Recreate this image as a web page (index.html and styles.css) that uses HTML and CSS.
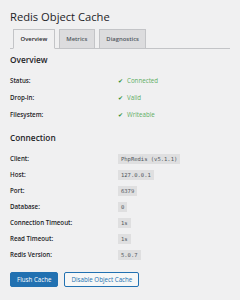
FILE: index.html
```html
<!DOCTYPE html>
<html lang="en">
<head>
    <meta charset="UTF-8">
    <meta name="viewport" content="width=device-width, initial-scale=1.0">
    <title>Redis Object Cache</title>
    <link rel="stylesheet" href="styles.css">
</head>
<body>
    <div class="wrap">
        <h1>Redis Object Cache</h1>

        <nav class="tabs">
            <a class="tab active" href="#overview">Overview</a>
            <a class="tab" href="#metrics">Metrics</a>
            <a class="tab" href="#diagnostics">Diagnostics</a>
        </nav>

        <h2>Overview</h2>
        <table class="info">
            <tr>
                <th>Status:</th>
                <td class="ok"><span class="check">&#10004;</span>Connected</td>
            </tr>
            <tr>
                <th>Drop-in:</th>
                <td class="ok"><span class="check">&#10004;</span>Valid</td>
            </tr>
            <tr>
                <th>Filesystem:</th>
                <td class="ok"><span class="check">&#10004;</span>Writeable</td>
            </tr>
        </table>

        <h2>Connection</h2>
        <table class="info compact">
            <tr>
                <th>Client:</th>
                <td><code>PhpRedis (v5.1.1)</code></td>
            </tr>
            <tr>
                <th>Host:</th>
                <td><code>127.0.0.1</code></td>
            </tr>
            <tr>
                <th>Port:</th>
                <td><code>6379</code></td>
            </tr>
            <tr>
                <th>Database:</th>
                <td><code>0</code></td>
            </tr>
            <tr>
                <th>Connection Timeout:</th>
                <td><code>1s</code></td>
            </tr>
            <tr>
                <th>Read Timeout:</th>
                <td><code>1s</code></td>
            </tr>
            <tr>
                <th>Redis Version:</th>
                <td><code>5.0.7</code></td>
            </tr>
        </table>

        <div class="actions">
            <button class="button primary">Flush Cache</button>
            <button class="button">Disable Object Cache</button>
        </div>
    </div>
</body>
</html>
```

FILE: styles.css
```css
body {
    font-family: "Open Sans", Arial, sans-serif;
    background-color: #f0f0f1;
    color: #3c434a;
    margin: 0;
    font-size: 6.2px;
}

.wrap {
    padding: 0 10px;
}

h1 {
    font-size: 11.2px;
    font-weight: 400;
    color: #1d2327;
    margin: 0;
    padding: 9px 0 0;
    line-height: 16px;
}

.tabs {
    display: flex;
    gap: 4px;
    padding-left: 3px;
    margin-top: 4px;
    border-bottom: 1px solid #c3c4c7;
}

.tab {
    display: block;
    padding: 0 6.5px;
    height: 18px;
    line-height: 18px;
    font-weight: 600;
    font-size: 5.9px;
    color: #50575e;
    text-decoration: none;
    background-color: #dcdcde;
    border: 1px solid #c3c4c7;
    border-bottom: none;
    margin-bottom: -1px;
}

.tab.active {
    background-color: #f0f0f1;
    color: #1d2327;
    border-bottom: 1px solid #f0f0f1;
}

h2 {
    font-size: 8.3px;
    font-weight: 600;
    color: #1d2327;
    margin: 5px 0 6px;
    line-height: 12px;
}

.info {
    border-collapse: collapse;
    width: 100%;
    margin-bottom: 9px;
}

.info th,
.info td {
    padding: 0;
    height: 17px;
    text-align: left;
    vertical-align: middle;
}

.compact th,
.compact td {
    height: 16.1px;
}

.info th {
    width: 108px;
    font-weight: 600;
    color: #1d2327;
}

.ok {
    color: #5eae63;
}

.check {
    color: #2e8f36;
    font-size: 6px;
    margin-right: 4px;
}

code {
    font-family: "DejaVu Sans Mono", monospace;
    font-size: 5.5px;
    color: #50575e;
    background-color: rgba(0, 0, 0, 0.07);
    padding: 2px 3px;
}

.actions {
    display: flex;
    gap: 6px;
    margin-top: 2px;
}

.button {
    font-family: inherit;
    font-size: 6.2px;
    height: 15px;
    padding: 0 6px;
    border: 1px solid #2271b1;
    border-radius: 2px;
    background-color: #f6f7f7;
    color: #2271b1;
    cursor: pointer;
}

.button.primary {
    background-color: #2271b1;
    color: #fff;
}
```
